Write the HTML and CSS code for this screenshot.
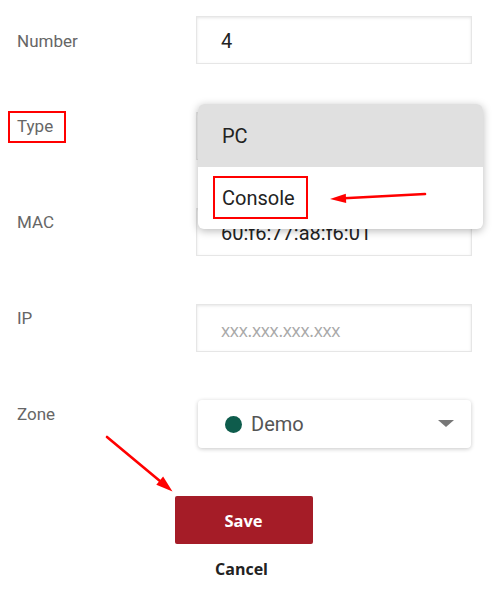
FILE: index.html
```html
<!DOCTYPE html>
<html>
<head>
<meta charset="utf-8">
<link rel="stylesheet" href="styles.css">
</head>
<body>
<div class="page">
  <form class="form">
    <div class="row">
      <div class="label label--center">Number</div>
      <div class="field input"><span class="value">4</span></div>
    </div>
    <div class="row">
      <div class="label"><span class="annot annot--type">Type</span></div>
      <div class="field-wrap">
        <div class="field input"><span class="value">PC</span></div>
        <div class="menu">
          <div class="menu-item menu-item--active">PC</div>
          <div class="menu-item"><span class="annot annot--console">Console</span></div>
        </div>
      </div>
    </div>
    <div class="row">
      <div class="label">MAC</div>
      <div class="field input"><span class="value">60:f6:77:a8:f6:01</span></div>
    </div>
    <div class="row">
      <div class="label">IP</div>
      <div class="field input"><span class="placeholder">xxx.xxx.xxx.xxx</span></div>
    </div>
    <div class="row">
      <div class="label">Zone</div>
      <div class="field select">
        <span class="dot"></span>
        <span class="select-value">Demo</span>
        <span class="caret"></span>
      </div>
    </div>
    <div class="actions">
      <button type="button" class="btn-save">Save</button>
      <button type="button" class="btn-cancel">Cancel</button>
    </div>
  </form>
  <svg class="arrows" width="494" height="589" viewBox="0 0 494 589">
    <line x1="425" y1="194" x2="344" y2="198.3" stroke="#f00" stroke-width="2.6" stroke-linecap="round"/>
    <polygon points="330,199 346.2,203 345.8,193.8" fill="#f00"/>
    <line x1="107" y1="437" x2="162" y2="482.7" stroke="#f00" stroke-width="2.6" stroke-linecap="round"/>
    <polygon points="172.5,491.5 156.3,484.8 163.1,476.6" fill="#f00"/>
  </svg>
</div>
</body>
</html>
```

FILE: styles.css
```css
* { box-sizing: border-box; }
html, body { margin: 0; padding: 0; background: #fff; }
body { font-family: Roboto, "Noto Sans", sans-serif; }

.page {
  position: relative;
  width: 494px;
  height: 589px;
  overflow: hidden;
}

.form {
  display: flex;
  flex-direction: column;
  gap: 48px;
  padding: 16px 0 0 17px;
}

.row {
  display: grid;
  grid-template-columns: 179px 276px;
  align-items: start;
}

.label {
  font-size: 17px;
  line-height: 20px;
  color: #666;
  padding-top: 4px;
}
.label--center { align-self: center; padding-top: 2px; }

.field-wrap { position: relative; }

.input {
  height: 48px;
  border: 1px solid #e6e6e6;
  box-shadow: inset 0 1px 3px rgba(0,0,0,0.10);
  background: #fff;
  display: flex;
  align-items: center;
  padding-left: 24px;
}
.value {
  font-size: 20px;
  color: #222;
  line-height: 24px;
  padding-top: 2px;
}
.placeholder {
  font-family: "Open Sans", sans-serif;
  font-size: 17.5px;
  letter-spacing: -0.3px;
  color: #a8a8a8;
  padding-top: 4px;
}

.select {
  margin-left: 2px;
  width: 273px;
  height: 48px;
  border-radius: 4px;
  background: #fff;
  box-shadow: 0 1px 4px rgba(0,0,0,0.22);
  display: flex;
  align-items: center;
  padding-left: 27px;
  padding-right: 17px;
}
.dot {
  width: 17px;
  height: 17px;
  border-radius: 50%;
  background: #0e5c4c;
  flex: none;
}
.select-value {
  font-size: 20px;
  color: #555;
  margin-left: 9px;
  flex: 1;
}
.caret {
  width: 0;
  height: 0;
  border-left: 8px solid transparent;
  border-right: 8px solid transparent;
  border-top: 7px solid #777;
  margin-top: -2px;
}

.menu {
  position: absolute;
  left: 2px;
  top: -8px;
  width: 285px;
  background: #fff;
  border-radius: 6px;
  overflow: hidden;
  box-shadow: 0 2px 8px rgba(0,0,0,0.28);
  z-index: 2;
}
.menu-item {
  height: 62px;
  display: flex;
  align-items: center;
  padding-left: 24px;
  font-size: 20px;
  color: #222;
}
.menu-item--active { background: #e0e0e0; height: 63px; }

.annot { position: relative; }
.annot::after {
  content: "";
  position: absolute;
  border: 2.5px solid #f00;
}
.annot--type::after { left: -9px; right: -13px; top: -5px; bottom: -7px; }
.annot--console::after { left: -9px; right: -13px; top: -10px; bottom: -9px; }

.actions {
  display: flex;
  flex-direction: column;
  align-items: center;
  width: 455px;
  padding-right: 6px;
}
.btn-save {
  width: 138px;
  height: 48px;
  border: none;
  border-radius: 2px;
  background: #a51c27;
  color: #fff;
  font-family: "Open Sans", sans-serif;
  font-weight: 700;
  font-size: 16.5px;
  margin-left: 4px;
}
.btn-cancel {
  margin-top: 14px;
  border: none;
  background: none;
  padding: 0;
  font-family: "Open Sans", sans-serif;
  font-weight: 700;
  font-size: 16px;
  color: #222;
  line-height: 22px;
}

.arrows {
  position: absolute;
  left: 0;
  top: 0;
  pointer-events: none;
  z-index: 5;
}
```
